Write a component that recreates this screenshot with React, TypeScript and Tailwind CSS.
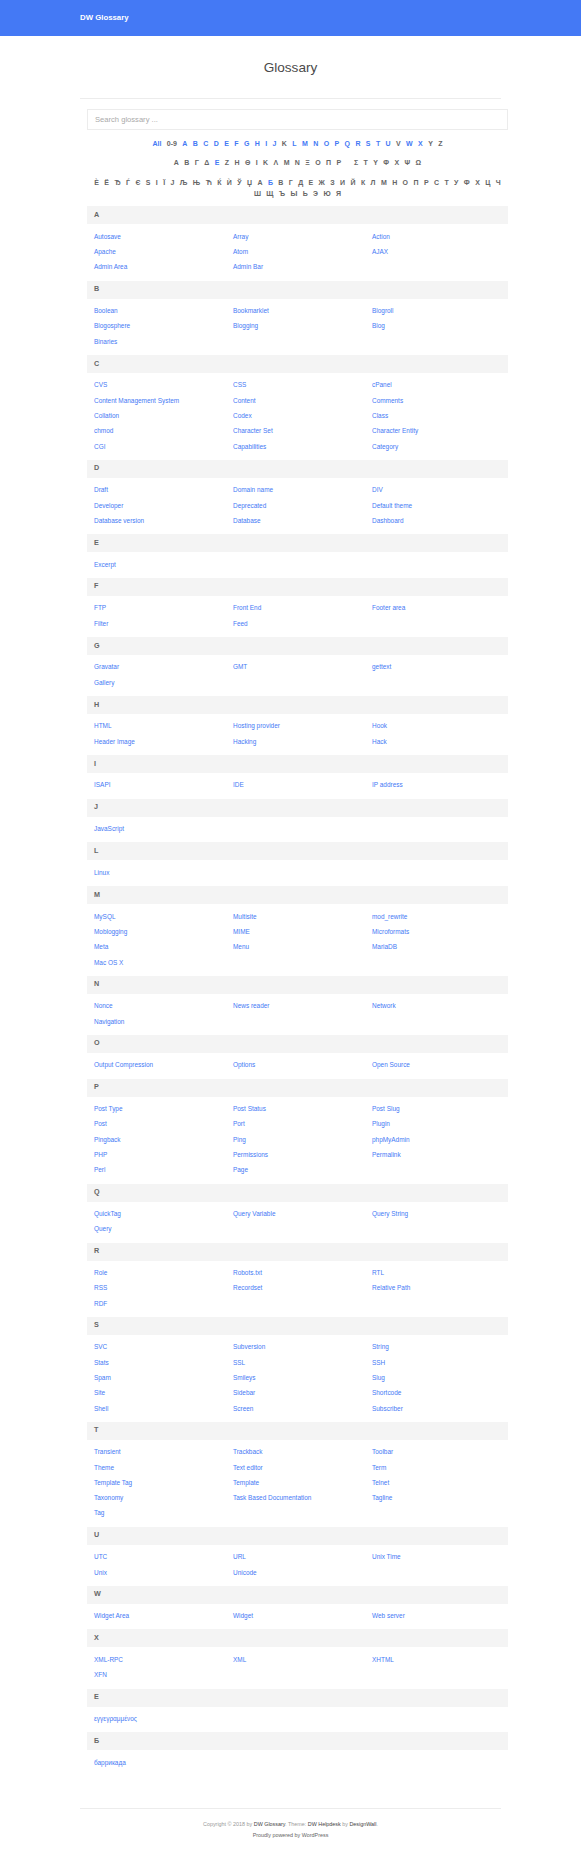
import React from 'react';

const BLUE = 'text-[#4479f5]';

type Letter = [string, boolean];

const latin: Letter[] = [
  ['All', true], ['0-9', false],
  ...'ABCDEFGHIJKLMNOPQRSTUVWXYZ'.split('').map(
    (l): Letter => [l, !['K', 'V', 'Y', 'Z'].includes(l)]
  ),
];

const greek: Letter[] = 'ΑΒΓΔΕΖΗΘΙΚΛΜΝΞΟΠΡ_ΣΤΥΦΧΨΩ'.split('').map(
  (l): Letter => [l, l === 'Ε']
);

const cyrillic1: Letter[] = 'ЀЁЂЃЄЅІЇЈЉЊЋЌЍЎЏАБВГДЕЖЗИЙКЛМНОПРСТУФХЦЧ'.split('').map(
  (l): Letter => [l, l === 'Б']
);

const cyrillic2: Letter[] = 'ШЩЪЫЬЭЮЯ'.split('').map((l): Letter => [l, false]);

const sections: [string, string[]][] = [
  ['A', ['Autosave', 'Array', 'Action', 'Apache', 'Atom', 'AJAX', 'Admin Area', 'Admin Bar']],
  ['B', ['Boolean', 'Bookmarklet', 'Blogroll', 'Blogosphere', 'Blogging', 'Blog', 'Binaries']],
  ['C', ['CVS', 'CSS', 'cPanel', 'Content Management System', 'Content', 'Comments', 'Collation', 'Codex', 'Class', 'chmod', 'Character Set', 'Character Entity', 'CGI', 'Capabilities', 'Category']],
  ['D', ['Draft', 'Domain name', 'DIV', 'Developer', 'Deprecated', 'Default theme', 'Database version', 'Database', 'Dashboard']],
  ['E', ['Excerpt']],
  ['F', ['FTP', 'Front End', 'Footer area', 'Filter', 'Feed']],
  ['G', ['Gravatar', 'GMT', 'gettext', 'Gallery']],
  ['H', ['HTML', 'Hosting provider', 'Hook', 'Header Image', 'Hacking', 'Hack']],
  ['I', ['ISAPI', 'IDE', 'IP address']],
  ['J', ['JavaScript']],
  ['L', ['Linux']],
  ['M', ['MySQL', 'Multisite', 'mod_rewrite', 'Moblogging', 'MIME', 'Microformats', 'Meta', 'Menu', 'MariaDB', 'Mac OS X']],
  ['N', ['Nonce', 'News reader', 'Network', 'Navigation']],
  ['O', ['Output Compression', 'Options', 'Open Source']],
  ['P', ['Post Type', 'Post Status', 'Post Slug', 'Post', 'Port', 'Plugin', 'Pingback', 'Ping', 'phpMyAdmin', 'PHP', 'Permissions', 'Permalink', 'Perl', 'Page']],
  ['Q', ['QuickTag', 'Query Variable', 'Query String', 'Query']],
  ['R', ['Role', 'Robots.txt', 'RTL', 'RSS', 'Recordset', 'Relative Path', 'RDF']],
  ['S', ['SVC', 'Subversion', 'String', 'Stats', 'SSL', 'SSH', 'Spam', 'Smileys', 'Slug', 'Site', 'Sidebar', 'Shortcode', 'Shell', 'Screen', 'Subscriber']],
  ['T', ['Transient', 'Trackback', 'Toolbar', 'Theme', 'Text editor', 'Term', 'Template Tag', 'Template', 'Telnet', 'Taxonomy', 'Task Based Documentation', 'Tagline', 'Tag']],
  ['U', ['UTC', 'URL', 'Unix Time', 'Unix', 'Unicode']],
  ['W', ['Widget Area', 'Widget', 'Web server']],
  ['X', ['XML-RPC', 'XML', 'XHTML', 'XFN']],
  ['Ε', ['εγγεγραμμένος']],
  ['Б', ['баррикада']],
];

const LetterRow = ({ letters, className }: { letters: Letter[]; className: string }) => (
  <div className={`flex justify-center gap-x-[5.4px] text-[7px] font-bold leading-[11px] ${className}`}>
    {letters.map(([l, active], i) =>
      l === '_' ? (
        <span key={i} className="w-[2px]" />
      ) : (
        <a key={i} href="#" className={active ? BLUE : 'text-[#666]'}>
          {l}
        </a>
      )
    )}
  </div>
);

const Section = ({ letter, terms }: { letter: string; terms: string[] }) => (
  <div>
    <div className="h-[18px] bg-[#f4f4f4] pl-[7px] flex items-center text-[7.2px] font-bold text-[#666]">
      {letter}
    </div>
    <div className="grid grid-cols-[139px_139px_139px] pl-[7px] pt-[4.7px] pb-[5.76px]">
      {terms.map((t) => (
        <a key={t} href="#" className={`h-[15.3px] flex items-center text-[6.45px] whitespace-nowrap ${BLUE}`}>
          {t}
        </a>
      ))}
    </div>
  </div>
);

export default function App() {
  return (
    <div className="min-h-[1854px] bg-white" style={{ fontFamily: '"Liberation Sans", Arial, "Noto Sans", sans-serif' }}>
      {/* Top bar */}
      <header className="h-[36px] bg-[#4479f5] flex items-center pl-[80px]">
        <span className="text-white font-bold text-[7.8px]">DW Glossary</span>
      </header>

      {/* Title + search */}
      <div className="ml-[80px] w-[421px]">
        <h1 className="mt-[24px] text-center text-[13.6px] leading-[16px] text-[#4a4a4a]">Glossary</h1>
        <div className="mt-[22.3px] h-px bg-[#ececec]" />
      </div>
      <div className="ml-[87px] w-[421px] mt-[9.7px]">
        <div className="h-[20.7px] border border-[#ececec] flex items-center pl-[7px] text-[7.6px] text-[#aaa]">
          Search glossary ...
        </div>
      </div>

      {/* Letters + list */}
      <div className="ml-[87px] w-[421px]">
        <LetterRow letters={latin} className="mt-[8.1px]" />
        <LetterRow letters={greek} className="mt-[8px]" />
        <div className="mt-[9.2px]">
          <LetterRow letters={cyrillic1} className="leading-[11.3px]" />
          <LetterRow letters={cyrillic2} className="leading-[11.3px]" />
        </div>

        <div className="mt-[7.3px]">
          {sections.map(([letter, terms]) => (
            <Section key={letter} letter={letter} terms={terms} />
          ))}
        </div>
      </div>

      {/* Footer */}
      <footer className="ml-[80px] w-[421px] mt-[32.5px] pb-[11px]">
        <div className="h-px bg-[#ececec]" />
        <p className="mt-[9.5px] text-center text-[5.4px] leading-[11px] text-[#999]">
          Copyright © 2018 by <a href="#" className="text-[#444]">DW Glossary</a>. Theme:{' '}
          <a href="#" className="text-[#444]">DW Helpdesk</a> by{' '}
          <a href="#" className="text-[#444]">DesignWall</a>.
        </p>
        <p className="text-center text-[5.4px] leading-[11px] text-[#666]">
          <a href="#">Proudly powered by WordPress</a>
        </p>
      </footer>
    </div>
  );
}
